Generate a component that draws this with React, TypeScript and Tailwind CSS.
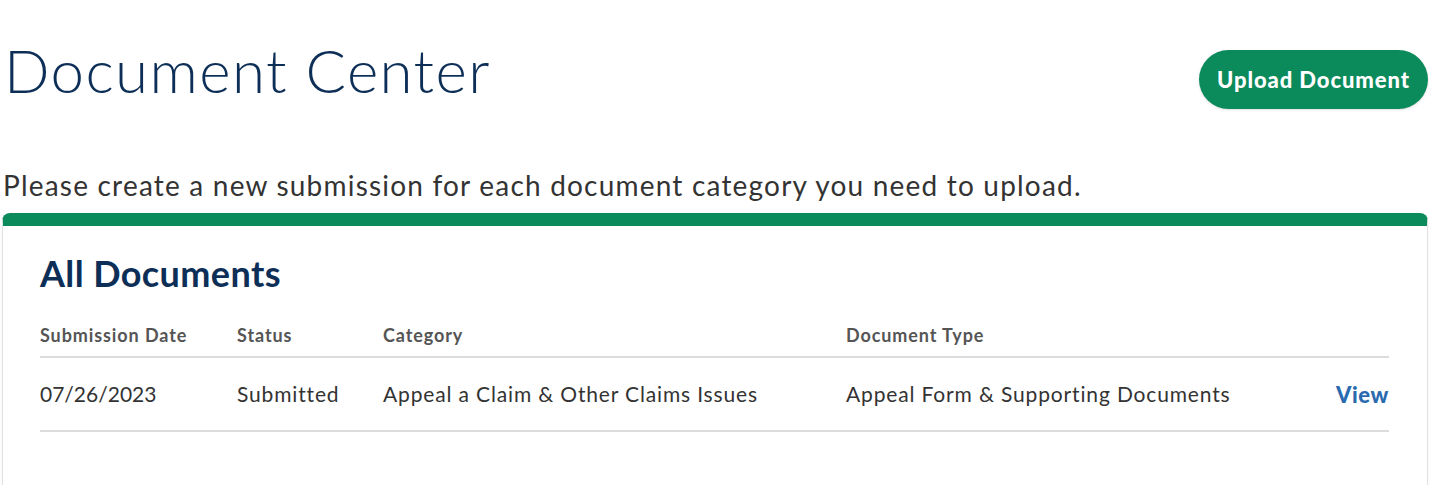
const rows = [
  {
    date: "07/26/2023",
    status: "Submitted",
    category: "Appeal a Claim & Other Claims Issues",
    type: "Appeal Form & Supporting Documents",
  },
];

export default function App() {
  return (
    <div className="bg-white w-[1430px] h-[485px] overflow-hidden px-[2px] font-['Lato','Open_Sans',sans-serif]">
      {/* ---------------------------------- header ---------------------------------- */}
      <div className="flex items-start justify-between pt-[36px]">
        <h1 className="text-[60px] leading-[68px] font-light text-[#0d2f57] pl-[2px] tracking-[1.4px]">
          Document Center
        </h1>
        <button className="mt-[14px] h-[59px] w-[229px] rounded-full bg-[#0b8a5b] text-white text-[22px] font-black tracking-[0.9px] shadow-sm">
          Upload Document
        </button>
      </div>

      <p className="mt-[58px] text-[28px] leading-[36px] text-[#333] pl-[1px] tracking-[1.2px]">
        Please create a new submission for each document category you need to upload.
      </p>

      {/* ---------------------------------- card ---------------------------------- */}
      <div className="mt-[10px] rounded-t-[8px] border border-[#e2e2e2] border-t-[13px] border-t-[#0b8a5b] bg-white pl-[37px] pr-[38px] pb-[60px] shadow-[0_1px_3px_rgba(0,0,0,0.06)]">
        <h2 className="mt-[25px] text-[36px] leading-[44px] font-bold text-[#0d2f57] tracking-[0.4px]">
          All Documents
        </h2>

        <div className="mt-[27px] grid grid-cols-[197px_146px_463px_1fr_auto] items-center border-b-2 border-[#dcdcdc] pb-[7px] text-[18px] font-bold text-[#555] tracking-[0.9px]">
          <span>Submission Date</span>
          <span>Status</span>
          <span>Category</span>
          <span>Document Type</span>
          <span />
        </div>

        {rows.map((r) => (
          <div
            key={r.date}
            className="grid grid-cols-[197px_146px_463px_1fr_auto] items-center border-b-2 border-[#dcdcdc] h-[74px] text-[21px] text-[#333] tracking-[0.85px]"
          >
            <span className="tracking-normal">{r.date}</span>
            <span>{r.status}</span>
            <span>{r.category}</span>
            <span>{r.type}</span>
            <a className="font-black text-[#2a6bb0] text-[22px] tracking-[0.6px]">View</a>
          </div>
        ))}
      </div>
    </div>
  );
}
